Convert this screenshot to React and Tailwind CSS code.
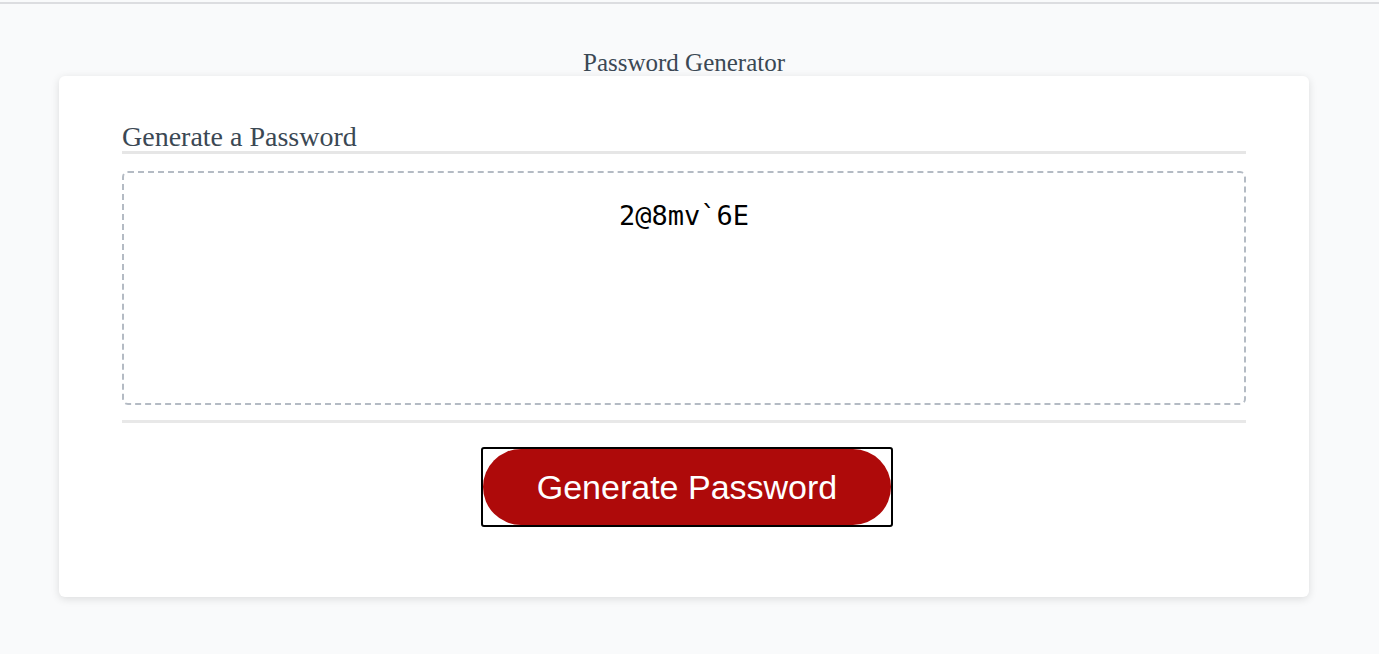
import React from "react";

const App = () => {
  return (
    <div className="min-h-[654px] bg-[#f9fafb] pt-[2px]">
      {/* top rule */}
      <div className="h-[2px] bg-[#dcdde0]" />

      <div className="w-[1368px]">
        <h1
          className="pt-[45px] h-[72px] text-center text-[25px] leading-[28px] text-[#3b4854]"
          style={{ fontFamily: '"Liberation Serif", "Times New Roman", serif' }}
        >
          Password Generator
        </h1>

        {/* card */}
        <div className="mx-[59px] w-[1250px] h-[521px] bg-white rounded-[6px] shadow-[0_2px_8px_rgba(0,0,0,0.12)] px-[63px] pt-[45px]">
          <h2
            className="h-[33px] text-[28px] leading-[31px] text-[#3b4854] border-b-[3px] border-[#e6e6e6]"
            style={{ fontFamily: '"Liberation Serif", "Times New Roman", serif' }}
          >
            Generate a Password
          </h2>

          <textarea
            readOnly
            value="2@8mv`6E"
            className="block mt-[17px] w-full h-[234px] resize-none border-2 border-dashed border-[#b4bbc4] rounded-[6px] pt-[27px] text-center text-[27px] leading-[31px] text-black outline-none"
            style={{ fontFamily: '"DejaVu Sans Mono", "Liberation Mono", monospace' }}
          />

          <div className="mt-[15px] h-[3px] bg-[#e8e8e8]" />

          <div className="flex justify-center mt-[24px] pl-[6px]">
            <div className="w-[412px] h-[80px] border-2 border-black rounded-[3px] flex">
              <button
                className="flex-1 rounded-full bg-[#ae0a0a] text-white text-[34px]"
                style={{ fontFamily: '"Liberation Sans", Arial, sans-serif' }}
              >
                Generate Password
              </button>
            </div>
          </div>
        </div>
      </div>
    </div>
  );
};

export default App;
